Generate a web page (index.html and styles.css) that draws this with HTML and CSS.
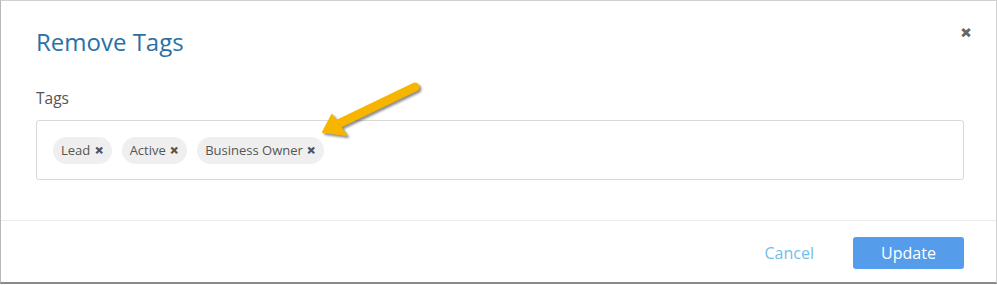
FILE: index.html
```html
<!DOCTYPE html>
<html>
<head>
<meta charset="utf-8">
<link rel="stylesheet" href="styles.css">
</head>
<body>
<div class="modal">
  <div class="modal-body">
    <div class="header">
      <h2 class="title">Remove Tags</h2>
      <span class="close">&#x2715;</span>
    </div>
    <label class="label">Tags</label>
    <div class="tag-box">
      <span class="chip">Lead <span class="x">&#x2715;</span></span>
      <span class="chip">Active <span class="x">&#x2715;</span></span>
      <span class="chip">Business Owner <span class="x">&#x2715;</span></span>
    </div>
  </div>
  <div class="footer">
    <button class="btn-link">Cancel</button>
    <button class="btn-primary">Update</button>
  </div>
  <svg class="arrow" width="120" height="70" viewBox="310 75 120 70">
    <defs>
      <filter id="sh" x="-20%" y="-20%" width="150%" height="150%">
        <feGaussianBlur stdDeviation="1.2"/>
      </filter>
    </defs>
    <g transform="translate(2,2)" fill="#333" stroke="#333" opacity="0.55" filter="url(#sh)">
      <line x1="415" y1="87" x2="338" y2="124" stroke-width="9" stroke-linecap="round"/>
      <polygon points="323,132 332,115 346,135" stroke-width="2" stroke-linejoin="round"/>
    </g>
    <g fill="#f7b500" stroke="#f7b500">
      <line x1="415" y1="87" x2="338" y2="124" stroke-width="9" stroke-linecap="round"/>
      <polygon points="323,132 332,115 346,135" stroke-width="2" stroke-linejoin="round"/>
    </g>
  </svg>
</div>
</body>
</html>
```
FILE: styles.css
```css
html, body {
  margin: 0;
  padding: 0;
  background: #fff;
  font-family: "Open Sans", "Liberation Sans", sans-serif;
}
.modal {
  position: relative;
  width: 995px;
  height: 281px;
  border: 1px solid #d0d0d0;
  border-bottom: 2px solid #8a8a8a;
  border-left-color: #b8b8b8;
  background: #fff;
}
.modal-body {
  padding: 0 25px 0 35px;
  height: 219px;
  border-bottom: 1px solid #ececec;
}
.header {
  display: flex;
  justify-content: space-between;
  align-items: flex-start;
  height: 86px;
}
.title {
  margin: 24px 0 0;
  font-size: 24px;
  font-weight: 400;
  color: #2a70a5;
  line-height: 34px;
}
.close {
  margin-top: 23px;
  font-size: 12px;
  font-weight: 700;
  color: #666;
  -webkit-text-stroke: 1px #666;
}
.label {
  display: block;
  font-size: 15.5px;
  color: #555;
  line-height: 22px;
  margin-top: 0;
}
.tag-box {
  margin-top: 11px;
  margin-right: 7px;
  height: 58px;
  border: 1px solid #d8d8d8;
  border-radius: 3px;
  padding: 0 16px;
  display: flex;
  align-items: center;
  gap: 10px;
}
.chip {
  display: inline-flex;
  align-items: center;
  height: 27px;
  padding: 0 9px 0 8px;
  border-radius: 14px;
  background: #efefef;
  font-size: 13px;
  color: #555;
  white-space: pre;
}
.chip .x {
  font-size: 10px;
  font-weight: 700;
  color: #555;
  -webkit-text-stroke: 0.5px #555;
  margin-left: 1px;
}
.footer {
  display: flex;
  justify-content: flex-end;
  align-items: center;
  padding: 16px 32px 0 0;
  gap: 39px;
}
.btn-link {
  border: none;
  background: none;
  font-family: inherit;
  font-size: 16px;
  color: #74bde9;
  padding: 0;
}
.btn-primary {
  width: 111px;
  height: 32px;
  border: none;
  border-radius: 3px;
  background: #559deb;
  color: #fff;
  font-family: inherit;
  font-size: 16px;
}
.arrow {
  position: absolute;
  left: 309px;
  top: 74px;
}
```
